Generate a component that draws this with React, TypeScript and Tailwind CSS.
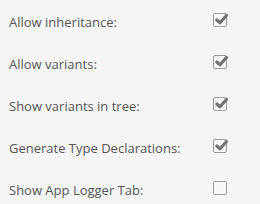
import React from "react";

const rows: { label: string; checked: boolean }[] = [
  { label: "Allow inheritance:", checked: true },
  { label: "Allow variants:", checked: true },
  { label: "Show variants in tree:", checked: true },
  { label: "Generate Type Declarations:", checked: true },
  { label: "Show App Logger Tab:", checked: false },
];

function Box({ checked }: { checked: boolean }) {
  return (
    <div className="w-[14px] h-[14px] mb-[5px] border border-[#9a9a9a] rounded-[2px] bg-[#f7f7f7] relative shrink-0">
      {checked && (
        <svg
          className="absolute left-[0px] top-[-2px]"
          width="15"
          height="15"
          viewBox="0 0 15 15"
        >
          <path
            d="M2.8 8 L6 10.8 L12.5 3.5"
            fill="none"
            stroke="#737373"
            strokeWidth="3.2"
            strokeLinecap="round"
            strokeLinejoin="round"
          />
        </svg>
      )}
    </div>
  );
}

export default function App() {
  return (
    <div className="w-[260px] h-[204px] bg-[#f5f5f5] pt-[1px] pl-[9px] pr-[33px] font-['Open_Sans',sans-serif] text-[13px] leading-[20px] text-[#555555]">
      {rows.map((r) => (
        <div key={r.label} className="h-[42px] flex items-center justify-between">
          <span>{r.label}</span>
          <Box checked={r.checked} />
        </div>
      ))}
    </div>
  );
}
